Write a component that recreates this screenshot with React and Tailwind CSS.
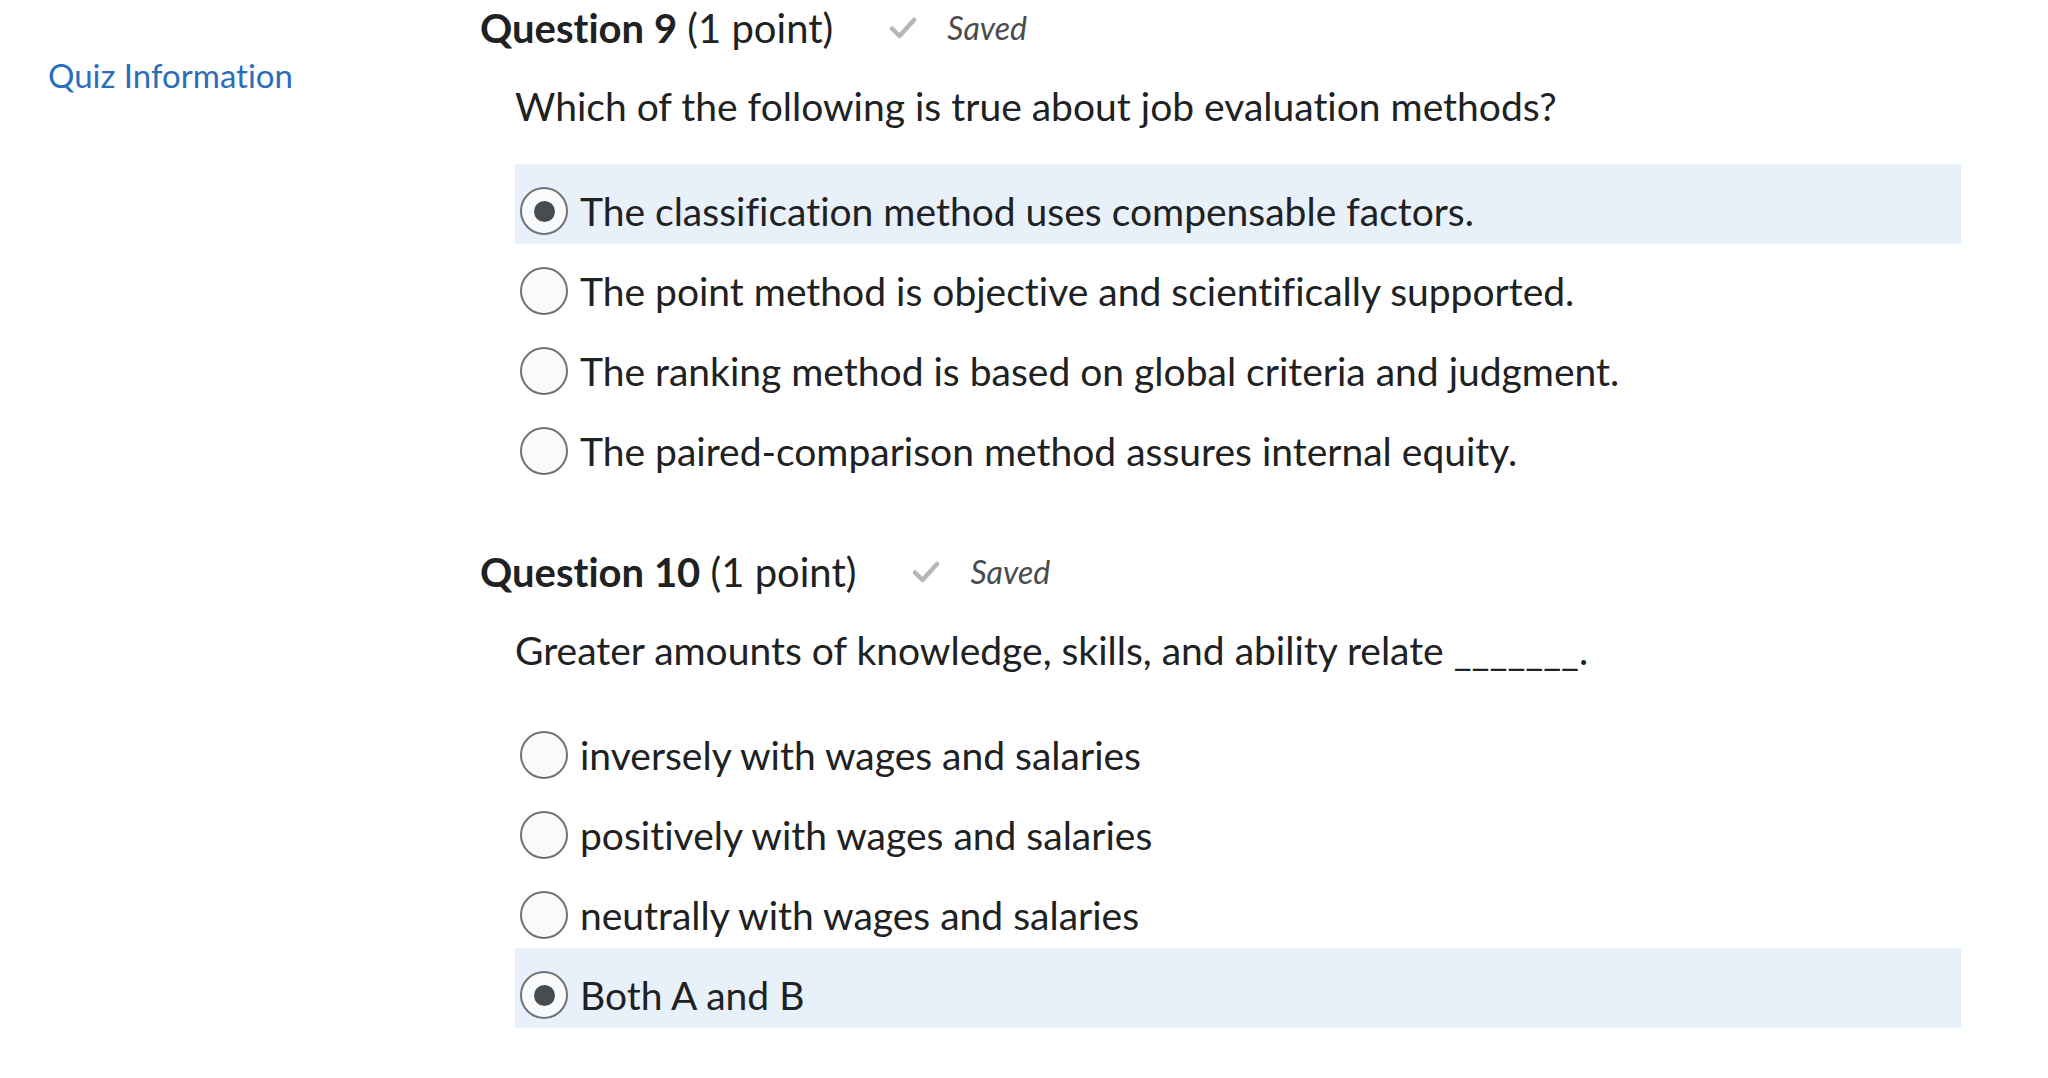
import React from "react";

const questions = [
  {
    number: 9,
    text: "Which of the following is true about job evaluation methods?",
    options: [
      "The classification method uses compensable factors.",
      "The point method is objective and scientifically supported.",
      "The ranking method is based on global criteria and judgment.",
      "The paired-comparison method assures internal equity.",
    ],
    selected: 0,
  },
  {
    number: 10,
    text: "Greater amounts of knowledge, skills, and ability relate _______.",
    options: [
      "inversely with wages and salaries",
      "positively with wages and salaries",
      "neutrally with wages and salaries",
      "Both A and B",
    ],
    selected: 3,
  },
];

const CheckIcon = () => (
  <svg width="28" height="24" viewBox="0 0 28 24" fill="none">
    <path d="M3 12.5 L10.5 20 L25 4" stroke="#b3b8bd" strokeWidth="4.5" strokeLinecap="round" strokeLinejoin="round" />
  </svg>
);

const Radio = ({ checked }) => (
  <span className="flex h-[48px] w-[48px] shrink-0 items-center justify-center rounded-full border-2 border-[#6e7376] bg-[#f9fafc]">
    {checked && <span className="h-[21px] w-[21px] rounded-full bg-[#494c4e]" />}
  </span>
);

const Question = ({ q, first }) => (
  <div className={first ? "pt-[4px]" : "pt-[64px]"}>
    <div className="flex items-center">
      <h2 className="text-[40px] leading-[48px] text-[#202122]">
        <span className="font-bold">Question {q.number}</span> (1 point)
      </h2>
      <span className="ml-[56px] flex items-center"><CheckIcon /></span>
      <span className="ml-[30px] text-[32px] italic leading-[48px] text-[#494c4e]">Saved</span>
    </div>
    <p className="ml-[35px] mt-[31px] text-[39px] leading-[46px] text-[#202122]">{q.text}</p>
    <div className="ml-[35px] mt-[35px] w-[1446px]">
      {q.options.map((opt, i) => (
        <label
          key={i}
          className={
            "flex h-[80px] items-center gap-[12px] pl-[5px] pt-[14px] " +
            (i === q.selected ? "bg-[#e8f0fa]" : "")
          }
        >
          <Radio checked={i === q.selected} />
          <span className="text-[39px] leading-[46px] text-[#202122]">{opt}</span>
        </label>
      ))}
    </div>
  </div>
);

export default function App() {
  return (
    <div className="flex min-h-[1078px] bg-white font-['Lato','Liberation_Sans',sans-serif] [font-variant-ligatures:none]">
      <aside className="w-[480px] shrink-0 pl-[48px] pt-[55px]">
        <a className="text-[33px] leading-[40px] text-[#2a6ebb]">Quiz Information</a>
      </aside>
      <main className="flex-1">
        {questions.map((q, i) => (
          <Question key={q.number} q={q} first={i === 0} />
        ))}
      </main>
    </div>
  );
}
